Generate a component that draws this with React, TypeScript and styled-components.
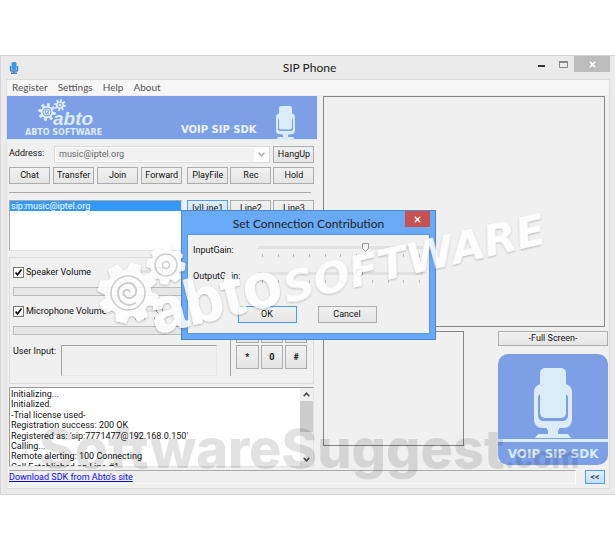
import React from "react";
import styled, { createGlobalStyle, css } from "styled-components";

const ui = 'Roboto, "Open Sans", sans-serif';
const chrome = 'Lato, "Open Sans", sans-serif';
const brandBlue = "#7d9fe6";
const brandPale = "#daecf7";

const Global = createGlobalStyle`
  *, *::before, *::after { box-sizing: border-box; }
  body { margin: 0; background: #fff; font: 9px/11px ${ui}; color: #111; }
  button, input { font: inherit; color: inherit; margin: 0; padding: 0; border-radius: 0; }
`;

const Page = styled.main`
  position: relative;
  padding-top: 55px;
  min-height: 100vh;
  overflow: hidden;
`;

const Window = styled.section`
  background: #ebebeb;
  border: 1px solid #d6d6d6;
  border-right: 0;
  padding: 0 5px 5px;
`;

const TitleBar = styled.header`
  display: grid;
  grid-template-columns: 1fr auto 1fr;
  height: 23px;
  padding-left: 3px;
`;

const TitleIcon = styled.span`
  align-self: center;
  height: 12px;
`;

const Title = styled.h1`
  margin: 0;
  font: 12px/24px ${chrome};
  color: #222;
`;

const Controls = styled.div`
  display: flex;
  justify-content: flex-end;
  align-items: flex-start;
`;

const ControlButton = styled.button<{ $close?: boolean }>`
  width: ${(p) => (p.$close ? 36 : 22)}px;
  height: 16px;
  border: 0;
  background: ${(p) => (p.$close ? "#bcbcbc" : "transparent")};
  display: grid;
  place-items: center;
`;

const Client = styled.div`
  background: #f0f0f0;
  border: 1px solid #dcdcdc;
  border-left-color: #e2e2e2;
  padding-bottom: 4px;
`;

const MenuBar = styled.nav`
  display: flex;
  gap: 10px;
  height: 16px;
  padding-left: 5px;
  background: #f6f6f6;
  border-bottom: 1px solid #ececec;
`;

const MenuItem = styled.button`
  border: 0;
  background: none;
  font: 10px/15px ${chrome};
  color: #555;
`;

const Columns = styled.div`
  display: grid;
  grid-template-columns: 311fr 286fr;
  gap: 6px;
  height: 371px;
`;

const Left = styled.div`
  display: flex;
  flex-direction: column;
  min-width: 0;
`;

const Banner = styled.div`
  display: flex;
  justify-content: space-between;
  align-items: flex-end;
  height: 44px;
  flex: none;
  padding: 0 22px 0 16px;
  background: ${brandBlue};
  border-bottom: 1px solid #d9ecfa;
  color: ${brandPale};
`;

const BannerTag = styled.div`
  display: flex;
  align-items: flex-end;
  gap: 20px;
`;

const BannerBrand = styled.span`
  padding-bottom: 4px;
  font: bold 10px/10px "DejaVu Sans", sans-serif;
  color: #eaf4fc;
  white-space: nowrap;
`;

const Panel = styled.div`
  flex: 1;
  display: flex;
  flex-direction: column;
  padding: 6px 3px 0 2px;
  min-height: 0;
`;

const AddressRow = styled.div`
  display: grid;
  grid-template-columns: 42px 1fr 41px;
  column-gap: 3px;
  height: 17px;
  line-height: 15px;
`;

const Combo = styled.div`
  display: flex;
  align-items: center;
  background: #fff;
  border: 1px solid #dadada;
  padding: 1px;
  min-width: 0;
`;

const ComboInput = styled.input`
  flex: 1;
  min-width: 0;
  height: 13px;
  border: 0;
  padding-left: 3px;
  background: #f1f1f1;
  color: #666;
`;

const ComboArrow = styled.button`
  width: 14px;
  height: 13px;
  border: 0;
  background: none;
  display: grid;
  place-items: center;
`;

const PushButton = styled.button<{ $tone?: "active" | "default" }>`
  min-width: 0;
  height: 17px;
  border: 1px solid #adadad;
  background: linear-gradient(#f1f1f1, #e5e5e5);
  text-align: center;
  white-space: nowrap;
  line-height: 13px;
  ${(p) =>
    p.$tone === "active" &&
    css`
      border-color: #569de5;
      background: linear-gradient(#e0eefb, #c4e0fc);
    `}
  ${(p) => p.$tone === "default" && css`border-color: #4a9df0;`}
`;

const Split = styled.div<{ $top: number }>`
  display: grid;
  grid-template-columns: 173fr 127fr;
  gap: 5px;
  margin-top: ${(p) => p.$top}px;
`;

const ButtonGroup = styled.div<{ $count: number }>`
  display: grid;
  grid-template-columns: repeat(${(p) => p.$count}, 1fr);
  column-gap: ${(p) => (p.$count === 4 ? 3 : 2)}px;
  align-content: start;
`;

const Divider = styled.hr`
  margin: 8px 2px 0 0;
  border: 0;
  border-top: 1px solid #a8a8a8;
  width: calc(100% - 3px);
`;

const CallList = styled.ul`
  margin: 0;
  padding: 0;
  list-style: none;
  height: 51px;
  background: #fff;
  border: 1px solid #a9a9a9;
  border-right-color: #e3e3e3;
  border-bottom-color: #e3e3e3;
`;

const CallItem = styled.li`
  background: #3399ff;
  color: #fff;
  padding-left: 1px;
  line-height: 10px;
`;

const Group = styled.div`
  display: grid;
  grid-template-columns: 211fr 77fr;
  margin-top: 6px;
  height: 127px;
  border: 1px solid #dcdcdc;
  padding: 9px 6px 7px 3px;
  gap: 5px;
`;

const Volumes = styled.div`
  display: flex;
  flex-direction: column;
  padding-right: 8px;
`;

const VolumeRow = styled.div`
  display: grid;
  grid-template-columns: 98px 1fr;
  height: 20px;
`;

const CheckLabel = styled.label`
  display: flex;
  align-items: center;
  gap: 2px;
  height: 11px;
  white-space: nowrap;
`;

const CheckBox = styled.input`
  appearance: none;
  width: 11px;
  height: 11px;
  border: 1px solid #777;
  background: #fff
    url("data:image/svg+xml,%3Csvg xmlns='http://www.w3.org/2000/svg' viewBox='0 0 9 9'%3E%3Cpath d='M1.5 4.5l2 2.3 4-5.3' fill='none' stroke='%23111' stroke-width='1.7'/%3E%3C/svg%3E")
    center / 9px 9px no-repeat;
`;

const Level = styled.div`
  height: 9px;
  border: 1px solid #bcbcbc;
  background: #e6e6e6;
  margin-bottom: 10px;
`;

const UserInputRow = styled.label`
  display: grid;
  grid-template-columns: 45px 1fr;
  column-gap: 3px;
  line-height: 13px;
  white-space: nowrap;
`;

const UserInput = styled.input`
  width: 100%;
  height: 31px;
  background: #f0f0f0;
  border: 1px solid #a5a5a5;
  border-right-color: #e6e6e6;
  border-bottom-color: #e6e6e6;
`;

const Keypad = styled.div`
  display: grid;
  grid-template-columns: repeat(3, 1fr);
  grid-auto-rows: 24px;
  gap: 2px;
  align-content: end;
  padding: 0 0 7px 5px;
  border-left: 1px solid #a5a5a5;
`;

const Key = styled(PushButton)`
  height: 24px;
  font-weight: bold;
`;

const LogBox = styled.div`
  display: flex;
  margin-top: 3px;
  height: 80px;
  border: 1px solid #999;
  border-right-color: #e3e3e3;
  border-bottom-color: #e3e3e3;
  background: #fff;
  overflow: hidden;
`;

const LogLines = styled.ol`
  flex: 1;
  margin: 0;
  padding: 1px 0 0 1px;
  list-style: none;
  display: grid;
  grid-template-rows: repeat(8, minmax(0, 1fr));
  height: 84px;
  line-height: 10px;
  white-space: nowrap;
`;

const ScrollBar = styled.div`
  display: flex;
  flex-direction: column;
  justify-content: space-between;
  width: 13px;
  background: #f0f0f0;
`;

const ScrollButton = styled.button`
  height: 13px;
  width: 13px;
  border: 0;
  background: none;
  display: grid;
  place-items: center;
`;

const ScrollThumb = styled.div`
  height: 31px;
  margin-bottom: auto;
  background: #cdcdcd;
`;

const Right = styled.div`
  display: flex;
  flex-direction: column;
  gap: 4px;
  min-width: 0;
`;

const Video = styled.div<{ $small?: boolean }>`
  border: 1px solid #858585;
  height: ${(p) => (p.$small ? 115 : 231)}px;
  margin-right: ${(p) => (p.$small ? 0 : 4)}px;
`;

const RightBottom = styled.div`
  display: grid;
  grid-template-columns: 141fr 110fr;
  column-gap: 34px;
  padding-right: 1px;
`;

const Promo = styled.div`
  display: flex;
  flex-direction: column;
  gap: 8px;
`;

const FullScreen = styled(PushButton)`
  height: 15px;
  line-height: 11px;
`;

const Badge = styled.div`
  display: flex;
  flex-direction: column;
  height: 111px;
  border-radius: 10px;
  background: ${brandBlue};
  overflow: hidden;
`;

const BadgeArt = styled.div`
  height: 88px;
  display: flex;
  justify-content: center;
  align-items: flex-end;
  padding-bottom: 1px;
  border-bottom: 3px solid ${brandPale};
`;

const BadgeText = styled.div`
  flex: 1;
  display: grid;
  place-items: center;
  font: bold 12px/14px "DejaVu Sans", sans-serif;
  color: ${brandPale};
`;

const StatusBar = styled.footer`
  display: grid;
  grid-template-columns: 1fr 20px;
  gap: 9px;
  margin: 3px 4px 0 2px;
`;

const StatusText = styled.div`
  height: 14px;
  border: 1px solid #aaa;
  border-width: 1px 1px 1px 0;
  border-right-color: #fff;
  border-bottom-color: #fafafa;
`;

const SiteLink = styled.a`
  color: #0a0af0;
  line-height: 12px;
`;

const Collapse = styled(PushButton)`
  height: 14px;
  line-height: 10px;
`;

const DialogLayer = styled.div`
  position: absolute;
  top: 210px;
  left: 0;
  right: 0;
  display: flex;
  justify-content: center;
  padding-left: 2px;
`;

const Dialog = styled.section`
  width: 255px;
  padding: 0 5px 5px;
  background: #69aaf6;
  border: 1px solid #4c87ca;
`;

const DialogBar = styled.header`
  display: grid;
  grid-template-columns: 25px 1fr 25px;
  height: 23px;
`;

const DialogTitle = styled.h2`
  margin: 0;
  text-align: center;
  font: 12px/25px ${chrome};
  color: #222;
  white-space: nowrap;
`;

const DialogClose = styled.button`
  height: 16px;
  border: 0;
  background: #c75050;
  display: grid;
  place-items: center;
`;

const DialogBody = styled.div`
  background: #f0f0f0;
  border: 1px solid #5b97de;
  padding: 8px 6px 10px 5px;
`;

const GainRow = styled.label`
  display: grid;
  grid-template-columns: 63px 1fr;
  column-gap: 2px;
  height: 26px;
  line-height: 14px;
`;

const SliderBox = styled.span`
  display: block;
  height: 16px;
`;

const Range = styled.input`
  appearance: none;
  display: block;
  width: 100%;
  height: 9px;
  background: linear-gradient(#e2e2e2, #e2e2e2) center / 100% 3px no-repeat;
  &::-webkit-slider-thumb {
    appearance: none;
    width: 7px;
    height: 9px;
    background: url("data:image/svg+xml,%3Csvg xmlns='http://www.w3.org/2000/svg' viewBox='0 0 7 9'%3E%3Cpath d='M.5.5h6v5l-3 3-3-3z' fill='%23f2f2f2' stroke='%23999'/%3E%3C/svg%3E");
  }
`;

const Ticks = styled.span`
  display: flex;
  justify-content: space-between;
  padding: 2px 3px 0 4px;
`;

const Tick = styled.i`
  width: 1px;
  height: 3px;
  background: #bbb;
`;

const DialogActions = styled.div`
  display: flex;
  justify-content: center;
  gap: 21px;
  padding: 11px 2px 0 0;
`;

const ActionButton = styled(PushButton)`
  width: 59px;
`;

const LogoMark = styled.svg`
  position: absolute;
  left: 0;
  top: 0;
  pointer-events: none;
`;

const SiteMark = styled.div`
  position: absolute;
  top: 417px;
  left: 39px;
  font: 800 54px/64px Inter, sans-serif;
  color: #000;
  opacity: 0.11;
  white-space: nowrap;
  pointer-events: none;
`;

const SiteMarkSuffix = styled.span`
  font-size: 30px;
`;

function gearPath(cx: number, cy: number, outer: number, inner: number, teeth: number, turn: number) {
  const pts: string[] = [];
  const step = (Math.PI * 2) / teeth;
  for (let i = 0; i < teeth; i++) {
    const a = i * step + turn;
    [
      [inner, -0.33],
      [outer, -0.19],
      [outer, 0.19],
      [inner, 0.33],
    ].forEach(([r, o]) => {
      pts.push(`${(cx + r * Math.cos(a + o * step)).toFixed(1)} ${(cy + r * Math.sin(a + o * step)).toFixed(1)}`);
    });
  }
  return `M${pts.join("L")}Z`;
}

const Mic = ({ width, height }: { width: number; height: number }) => (
  <svg width={width} height={height} viewBox="0 0 38 70" preserveAspectRatio="none" aria-hidden="true">
    <rect x="0" y="16" width="38" height="44" rx="8" fill={brandPale} />
    <rect x="4" y="25" width="30" height="28" rx="5" fill={brandBlue} />
    <rect x="6" y="0" width="26" height="50" rx="5" fill={brandPale} />
    <path d="M12 59h14l-2 4v3h10l3 4H1l3-4h10v-3z" fill={brandPale} />
  </svg>
);

const BannerLogo = () => (
  <svg width="88" height="40" viewBox="22 99 88 40" role="img" aria-label="Abto Software">
    <g fill={brandPale} stroke={brandBlue}>
      <path d={gearPath(46, 112, 9, 6, 8, 0.2)} stroke="none" />
      <circle cx="46" cy="112" r="4" fill="none" />
      <path d="M48 114q-4 1-4-2t3-2q2 2-1 3" fill="none" />
      <path d={gearPath(59, 105, 6, 4, 8, 0.2)} stroke="none" />
      <circle cx="59" cy="105" r="2" fill="none" />
    </g>
    <text x="52" y="125" fontFamily="Liberation Sans" fontWeight="bold" fontStyle="italic" fontSize="19" fill={brandPale}>abto</text>
    <text x="24" y="135" fontFamily="DejaVu Sans" fontWeight="bold" fontSize="8" fill={brandPale}>ABTO SOFTWARE</text>
  </svg>
);

const Chevron = ({ up, color = "#444" }: { up?: boolean; color?: string }) => (
  <svg width="7" height="5" viewBox="0 0 7 5" aria-hidden="true">
    <path d={up ? "M.7 4.2l2.8-3 2.8 3" : "M.7.8l2.8 3 2.8-3"} fill="none" stroke={color} strokeWidth="1.5" />
  </svg>
);

const Cross = () => (
  <svg width="7" height="7" viewBox="0 0 7 7" aria-hidden="true">
    <path d="M.8.8l5.4 5.4M6.2.8L.8 6.2" stroke="#fff" strokeWidth="1.5" />
  </svg>
);

const Slider = ({ value, label }: { value: number; label?: string }) => (
  <SliderBox>
    <Range type="range" min={0} max={100} defaultValue={value} aria-label={label} />
    <Ticks>
      {Array.from({ length: 11 }, (_, i) => (
        <Tick key={i} />
      ))}
    </Ticks>
  </SliderBox>
);

const log = [
  "Initializing...",
  "Initialized.",
  "-Trial license used-",
  "Registration success: 200 OK",
  "Registered as: 'sip:7771477@192.168.0.150'",
  "Calling...",
  "Remote alerting: 100 Connecting",
  "Call Established on Line #1",
];

export default function App() {
  return (
    <Page>
      <Global />
      <Window>
        <TitleBar>
          <TitleIcon>
            <svg width="10" height="12" viewBox="0 0 10 12" aria-hidden="true">
              <rect x="2.5" y="0" width="5" height="8" rx="1.5" fill="#329be8" />
              <path d="M1.5 4v4q0 1 1 1h5q1 0 1-1V4M5 9v2M2 11.2h6" fill="none" stroke="#427cc0" strokeWidth="1.4" />
            </svg>
          </TitleIcon>
          <Title>SIP Phone</Title>
          <Controls>
            <ControlButton aria-label="Minimize">
              <svg width="7" height="7"><path d="M0 5h7" stroke="#333" strokeWidth="2" /></svg>
            </ControlButton>
            <ControlButton aria-label="Maximize">
              <svg width="9" height="7"><path d="M.5 1h8v5.5h-8z" fill="none" stroke="#888" /><path d="M0 1h9" stroke="#888" strokeWidth="2" /></svg>
            </ControlButton>
            <ControlButton $close aria-label="Close"><Cross /></ControlButton>
          </Controls>
        </TitleBar>
        <Client>
          <MenuBar>
            {["Register", "Settings", "Help", "About"].map((m) => (
              <MenuItem key={m}>{m}</MenuItem>
            ))}
          </MenuBar>
          <Columns>
            <Left>
              <Banner>
                <BannerLogo />
                <BannerTag>
                  <BannerBrand>VOIP SIP SDK</BannerBrand>
                  <Mic width={19} height={33} />
                </BannerTag>
              </Banner>
              <Panel>
                <AddressRow>
                  <label htmlFor="address">Address:</label>
                  <Combo>
                    <ComboInput id="address" defaultValue="music@iptel.org" />
                    <ComboArrow aria-label="Show addresses"><Chevron color="#aaa" /></ComboArrow>
                  </Combo>
                  <PushButton>HangUp</PushButton>
                </AddressRow>
                <Split $top={4}>
                  <ButtonGroup $count={4}>
                    {["Chat", "Transfer", "Join", "Forward"].map((b) => (
                      <PushButton key={b}>{b}</PushButton>
                    ))}
                  </ButtonGroup>
                  <ButtonGroup $count={3}>
                    {["PlayFile", "Rec", "Hold"].map((b) => (
                      <PushButton key={b}>{b}</PushButton>
                    ))}
                  </ButtonGroup>
                </Split>
                <Divider />
                <Split $top={7}>
                  <CallList>
                    <CallItem>sip:music@iptel.org</CallItem>
                  </CallList>
                  <ButtonGroup $count={3}>
                    <PushButton $tone="active">[v]Line1</PushButton>
                    <PushButton>Line2</PushButton>
                    <PushButton>Line3</PushButton>
                  </ButtonGroup>
                </Split>
                <Group>
                  <Volumes>
                    <VolumeRow>
                      <CheckLabel><CheckBox type="checkbox" defaultChecked />Speaker Volume</CheckLabel>
                      <Slider value={45} label="Speaker level" />
                    </VolumeRow>
                    <Level />
                    <VolumeRow>
                      <CheckLabel><CheckBox type="checkbox" defaultChecked />Microphone Volume</CheckLabel>
                      <Slider value={45} label="Microphone level" />
                    </VolumeRow>
                    <Level />
                    <UserInputRow>
                      User Input:
                      <UserInput />
                    </UserInputRow>
                  </Volumes>
                  <Keypad>
                    {["1", "2", "3", "4", "5", "6", "7", "8", "9", "*", "0", "#"].map((k) => (
                      <Key key={k}>{k}</Key>
                    ))}
                  </Keypad>
                </Group>
                <LogBox>
                  <LogLines>
                    {log.map((line) => (
                      <li key={line}>{line}</li>
                    ))}
                  </LogLines>
                  <ScrollBar>
                    <ScrollButton aria-label="Scroll up"><Chevron up /></ScrollButton>
                    <ScrollThumb />
                    <ScrollButton aria-label="Scroll down"><Chevron /></ScrollButton>
                  </ScrollBar>
                </LogBox>
              </Panel>
            </Left>
            <Right>
              <Video />
              <RightBottom>
                <Video $small />
                <Promo>
                  <FullScreen>-Full Screen-</FullScreen>
                  <Badge>
                    <BadgeArt><Mic width={38} height={70} /></BadgeArt>
                    <BadgeText>VOIP SIP SDK</BadgeText>
                  </Badge>
                </Promo>
              </RightBottom>
            </Right>
          </Columns>
          <StatusBar>
            <StatusText>
              <SiteLink href="#download">Download SDK from Abto's site</SiteLink>
            </StatusText>
            <Collapse $tone="active">&lt;&lt;</Collapse>
          </StatusBar>
        </Client>
      </Window>

      <DialogLayer>
        <Dialog role="dialog" aria-labelledby="dialog-title">
          <DialogBar>
            <span />
            <DialogTitle id="dialog-title">Set Connection Contribution</DialogTitle>
            <DialogClose aria-label="Close dialog"><Cross /></DialogClose>
          </DialogBar>
          <DialogBody>
            <GainRow>InputGain:<Slider value={66} /></GainRow>
            <GainRow>OutputGain:<Slider value={62} /></GainRow>
            <DialogActions>
              <ActionButton $tone="default">OK</ActionButton>
              <ActionButton>Cancel</ActionButton>
            </DialogActions>
          </DialogBody>
        </Dialog>
      </DialogLayer>

      <LogoMark width="600" height="400" viewBox="0 0 600 400" aria-hidden="true">
        <defs>
          <filter id="lift" x="-10%" y="-10%" width="120%" height="120%">
            <feDropShadow dx="0" dy="1" stdDeviation="1" floodColor="#000" floodOpacity="0.3" />
          </filter>
        </defs>
        <g filter="url(#lift)" opacity="0.85" fill="#fff" stroke="#fff" strokeLinejoin="round">
          <path d={gearPath(128, 293, 29, 22, 8, 0.25)} strokeWidth="3" />
          <path d={gearPath(166, 265, 18, 14, 8, 0.1)} strokeWidth="3" />
          <g fill="none" stroke="#c8c8c8" strokeWidth="1.5">
            <circle cx="128" cy="293" r="17" />
            <path d="M136 303c-9 5-18-1-18-10s12-14 17-6c5 9-7 15-11 8-2-5 4-7 6-3" strokeWidth="2" />
            <circle cx="166" cy="265" r="11" />
            <circle cx="166" cy="265" r="3.5" />
          </g>
          <text transform="translate(156 334) rotate(-14)" fontFamily="Liberation Sans" fontWeight="bold" fontSize="63" strokeWidth="1">abto</text>
          <text transform="translate(287 303) rotate(-13)" fontFamily="DejaVu Sans" fontWeight="bold" fontStyle="italic" fontSize="43" strokeWidth="0">SOFTWARE</text>
        </g>
      </LogoMark>
      <SiteMark aria-hidden="true">SoftwareSuggest<SiteMarkSuffix>.com</SiteMarkSuffix></SiteMark>
    </Page>
  );
}
